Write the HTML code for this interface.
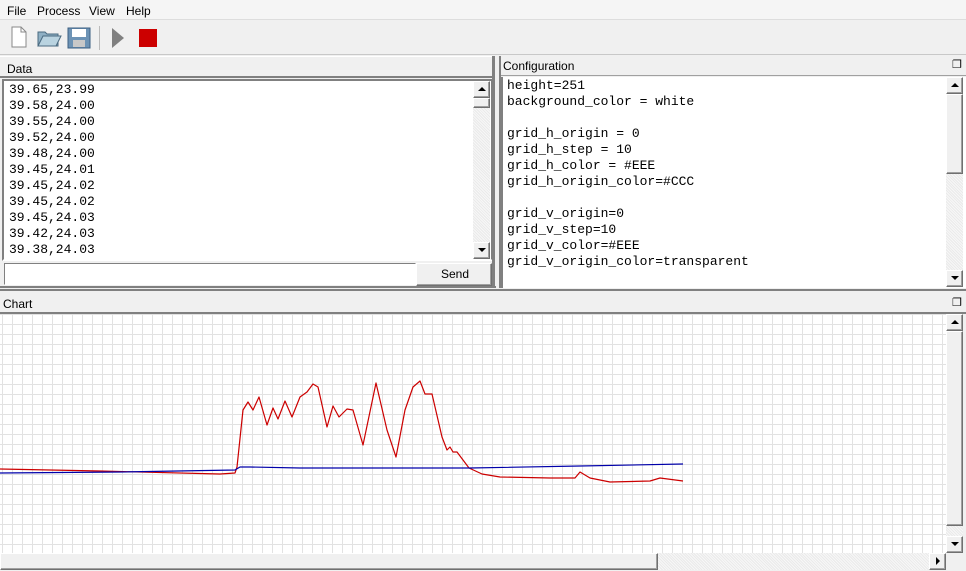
<!DOCTYPE html>
<html><head><style>
*{margin:0;padding:0;box-sizing:border-box}
body{width:966px;height:571px;background:#f0f0f0;font-family:"Liberation Sans",sans-serif;font-size:12px;position:relative;overflow:hidden;color:#000}
.a{position:absolute}
pre{font-family:"Liberation Mono",monospace;font-size:13px;line-height:16px;white-space:pre;position:absolute;margin:0}
.sb{background:#f3f3f3;background-image:repeating-linear-gradient(45deg,#eaeaea 0 1px,#f7f7f7 1px 2px)}
.btn{background:#f0f0f0;border:1px solid;border-color:#fff #707070 #707070 #fff;box-shadow:inset -1px -1px #a0a0a0}
.hdr{background:#f0f0f0;border-bottom:2px solid #808080}
.tri{width:0;height:0;position:absolute}
.m{position:absolute;top:4px;font-size:12px}
</style></head><body>
<div class="a" style="left:0;top:0;width:966px;height:20px;background:#f5f5f5;border-bottom:1px solid #ddd"></div>
<div class="m" style="left:7px">File</div>
<div class="m" style="left:37px">Process</div>
<div class="m" style="left:89px">View</div>
<div class="m" style="left:126px">Help</div>
<svg class="a" style="left:0;top:22px" width="170" height="32">
<path d="M12 5h9l5 5v15h-14z" fill="#fff" stroke="#888"/><path d="M21 5v5h5" fill="none" stroke="#888"/>
<path d="M38 10h7l2 2h11v12h-20z" fill="#8fb0c4" stroke="#4a6a80"/><path d="M38 24l5-10h18l-5 10z" fill="#b9d3e0" stroke="#4a6a80"/>
<rect x="68" y="6" width="22" height="20" fill="#6d93b5" stroke="#3d5f82"/><rect x="72" y="7" width="14" height="8" fill="#fff"/><rect x="73" y="18" width="12" height="7" fill="#c8c8c8"/>
<line x1="99.5" y1="4" x2="99.5" y2="28" stroke="#bbb"/>
<path d="M112 6l12 10-12 10z" fill="#808080"/>
<rect x="139" y="7" width="18" height="18" fill="#cc0000"/>
</svg>
<div class="a" style="left:0;top:54px;width:966px;height:1px;background:#c8c8c8"></div>
<div class="a hdr" style="left:0;top:56px;width:494px;height:22px;border-top:1px solid #fff;border-right:2px solid #808080"></div>
<div class="a" style="left:7px;top:62px">Data</div>
<div class="a" style="left:2px;top:79px;width:491px;height:182px;background:#fff;border:2px solid;border-color:#808080 #808080 #fff #808080"></div>
<pre style="left:9px;top:82px;font-family:'Liberation Mono','Courier New',monospace">39.65,23.99
39.58,24.00
39.55,24.00
39.52,24.00
39.48,24.00
39.45,24.01
39.45,24.02
39.45,24.02
39.45,24.03
39.42,24.03
39.38,24.03</pre>
<div class="a sb" style="left:473px;top:81px;width:17px;height:178px"></div>
<div class="a btn" style="left:473px;top:81px;width:17px;height:17px"></div>
<div class="tri" style="left:478px;top:87px;border:4px solid transparent;border-bottom:4px solid #000;border-top:0"></div>
<div class="a btn" style="left:473px;top:98px;width:17px;height:10px"></div>
<div class="a btn" style="left:473px;top:242px;width:17px;height:17px"></div>
<div class="tri" style="left:478px;top:248px;border:4px solid transparent;border-top:4px solid #000;border-bottom:0"></div>
<div class="a" style="left:4px;top:263px;width:412px;height:22px;background:#fff;border:1px solid;border-color:#808080 #fff #fff #808080"></div>
<div class="a btn" style="left:416px;top:263px;width:76px;height:23px"></div>
<div class="a" style="left:441px;top:267px">Send</div>
<div class="a" style="left:0;top:286px;width:496px;height:2px;background:#808080"></div>
<div class="a" style="left:492px;top:56px;width:3px;height:232px;background:#808080"></div>
<div class="a" style="left:499px;top:56px;width:2px;height:232px;background:#808080"></div>
<div class="a hdr" style="left:501px;top:56px;width:465px;height:20px;border-bottom:1px solid #a0a0a0"></div>
<div class="a" style="left:503px;top:59px">Configuration</div>
<div class="a" style="left:952px;top:58px;font-size:11px">&#x2750;</div>
<div class="a" style="left:501px;top:77px;width:465px;height:211px;background:#fff;border-left:2px solid #808080"></div>
<pre style="left:507px;top:78px;font-family:'Liberation Mono','Courier New',monospace">height=251
background_color = white

grid_h_origin = 0
grid_h_step = 10
grid_h_color = #EEE
grid_h_origin_color=#CCC

grid_v_origin=0
grid_v_step=10
grid_v_color=#EEE
grid_v_origin_color=transparent</pre>
<div class="a sb" style="left:946px;top:77px;width:17px;height:210px"></div>
<div class="a btn" style="left:946px;top:77px;width:17px;height:17px"></div>
<div class="tri" style="left:951px;top:83px;border:4px solid transparent;border-bottom:4px solid #000;border-top:0"></div>
<div class="a btn" style="left:946px;top:94px;width:17px;height:80px"></div>
<div class="a btn" style="left:946px;top:270px;width:17px;height:17px"></div>
<div class="tri" style="left:951px;top:276px;border:4px solid transparent;border-top:4px solid #000;border-bottom:0"></div>
<div class="a" style="left:0;top:288px;width:966px;height:3px;background:#f0f0f0;border-bottom:2px solid #808080"></div>
<div class="a hdr" style="left:0;top:292px;width:966px;height:22px"></div>
<div class="a" style="left:3px;top:297px">Chart</div>
<div class="a" style="left:952px;top:296px;font-size:11px">&#x2750;</div>
<svg class="a" style="left:0;top:314px" width="946" height="239">
<defs><pattern id="g" x="2" y="0" width="10" height="10" patternUnits="userSpaceOnUse"><path d="M0.5 0V10M0 0.5H10" stroke="#e2e2e2" fill="none"/></pattern></defs>
<rect width="946" height="239" fill="#fff"/><rect width="946" height="239" fill="url(#g)"/>
<g transform="translate(0,-314)" fill="none" stroke-width="1.2" stroke-linejoin="round">
<polyline stroke="#cc0000" points="0,469 100,471 220,474 235,473 237,467 243,410 248,402 253,410 259,397 267,425 273,408 278,419 285,401 292,417 300,397 307,392 313,384 318,387 327,427 333,406 339,417 347,409 353,410 363,445 376,383 387,430 396,457 405,410 413,387 420,381 425,394 432,394 442,437 447,450 450,447 453,452 457,452 469,468 482,474 500,477 550,478 575,478 580,472 590,478 610,482 650,481 660,478 683,481"/>
<polyline stroke="#0000aa" points="0,473 120,472 235,470 240,467 250,467 300,468 400,468 470,468 580,466 683,464"/>
</g>
</svg>
<div class="a sb" style="left:946px;top:314px;width:17px;height:239px"></div>
<div class="a btn" style="left:946px;top:314px;width:17px;height:17px"></div>
<div class="tri" style="left:951px;top:320px;border:4px solid transparent;border-bottom:4px solid #000;border-top:0"></div>
<div class="a btn" style="left:946px;top:331px;width:17px;height:195px"></div>
<div class="a btn" style="left:946px;top:536px;width:17px;height:17px"></div>
<div class="tri" style="left:951px;top:542px;border:4px solid transparent;border-top:4px solid #000;border-bottom:0"></div>
<div class="a sb" style="left:0;top:553px;width:946px;height:17px"></div>
<div class="a btn" style="left:0;top:553px;width:658px;height:17px"></div>
<div class="a btn" style="left:929px;top:553px;width:17px;height:17px"></div>
<div class="tri" style="left:936px;top:557px;border:4px solid transparent;border-left:4px solid #000;border-right:0"></div>
</body></html>
